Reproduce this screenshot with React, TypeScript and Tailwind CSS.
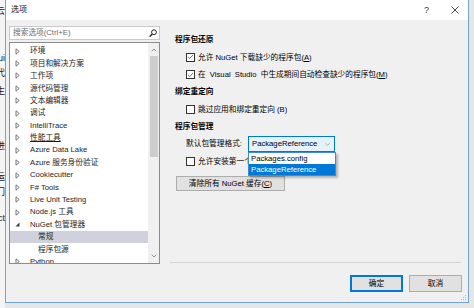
import { Check, ChevronDown, ChevronUp } from "lucide-react";

type Node = { label: string; kind: "closed" | "open" | "child"; selected?: boolean; underline?: boolean };

const tree: Node[] = [
  { label: "环境", kind: "closed" },
  { label: "项目和解决方案", kind: "closed" },
  { label: "工作项", kind: "closed" },
  { label: "源代码管理", kind: "closed" },
  { label: "文本编辑器", kind: "closed" },
  { label: "调试", kind: "closed" },
  { label: "IntelliTrace", kind: "closed" },
  { label: "性能工具", kind: "closed", underline: true },
  { label: "Azure Data Lake", kind: "closed" },
  { label: "Azure 服务身份验证", kind: "closed" },
  { label: "Cookiecutter", kind: "closed" },
  { label: "F# Tools", kind: "closed" },
  { label: "Live Unit Testing", kind: "closed" },
  { label: "Node.js 工具", kind: "closed" },
  { label: "NuGet 包管理器", kind: "open" },
  { label: "常规", kind: "child", selected: true },
  { label: "程序包源", kind: "child" },
  { label: "Python", kind: "closed" },
];

// bits of the window behind the dialog, only the right edge shows
const behind = [
  { y: 7, t: "云" },
  { y: 38, t: "ui" },
  { y: 6, t: "代" },
  { y: 9, t: "生" },
  { y: 46, t: "进" },
  { y: 22, t: "运" },
  { y: 6, t: "门" },
  { y: 17, t: "ct" },
];

function Arrow({ open }: { open: boolean }) {
  if (open) {
    return (
      <svg width="5" height="5" viewBox="0 0 5 5">
        <path d="M4.5 0.5 L4.5 4.5 L0.5 4.5 Z" fill="#3c3c3c" />
      </svg>
    );
  }
  return (
    <svg width="5" height="7" viewBox="0 0 5 7">
      <path d="M1 0.8 L4.2 3.5 L1 6.2 Z" fill="none" stroke="#6a6a6a" strokeWidth="0.9" />
    </svg>
  );
}

function Box({ checked }: { checked?: boolean }) {
  return (
    <span className="flex h-[9px] w-[9px] shrink-0 items-center justify-center border border-[#333] bg-white">
      {checked && <Check size={8} strokeWidth={2.2} color="#222" />}
    </span>
  );
}

function Key({ k }: { k: string }) {
  return (
    <>
      (<span className="underline underline-offset-1">{k}</span>)
    </>
  );
}

export default function App() {
  return (
    <div
      className="flex h-[308px] w-[474px] overflow-hidden bg-[#e6e6e6] text-[7.7px] leading-none text-black"
      style={{ fontFamily: '"Liberation Sans", "Noto Sans CJK SC", sans-serif' }}
    >
      {/* window behind */}
      <div className="flex h-full w-[5px] shrink-0 flex-col overflow-hidden bg-[#f4f4f4] text-[9px] text-[#222]">
        {behind.map((b, i) => (
          <div key={i} className="flex justify-end whitespace-nowrap" style={{ marginTop: b.y }}>
            {b.t}
          </div>
        ))}
      </div>

      {/* dialog */}
      <div className="flex h-[303px] w-[464px] shrink-0 flex-col border border-t-0 border-[#6ea5d9] bg-[#f0f0f0]">
        <div className="flex h-[20px] shrink-0 items-center bg-white pl-[5px] pr-[9px]">
          <span className="text-[8px] text-[#111]">选项</span>
          <span className="ml-auto mr-[22px] text-[9px] text-[#333]">?</span>
          <svg width="8" height="8" viewBox="0 0 8 8">
            <path d="M0.5 0.5 L7.5 7.5 M7.5 0.5 L0.5 7.5" stroke="#333" strokeWidth="0.9" />
          </svg>
        </div>

        <div className="flex h-[244px] shrink-0">
          {/* left side */}
          <div className="ml-[3px] flex w-[151px] shrink-0 flex-col pt-[6px]">
            <div className="flex h-[14px] items-center border border-[#cacaca] bg-white pl-[3px] pr-[2px] text-[#6d6d6d]">
              <span>搜索选项(Ctrl+E)</span>
              <svg className="ml-auto" width="8" height="9" viewBox="0 0 8 9">
                <circle cx="5" cy="3.2" r="2.4" fill="none" stroke="#222" strokeWidth="1" />
                <path d="M3.2 5 L0.6 7.8" stroke="#222" strokeWidth="1.3" />
              </svg>
            </div>
            <div className="mt-[2px] flex h-[222px] border border-[#8c8c8c] bg-white">
              <div className="flex min-w-0 flex-1 flex-col overflow-hidden pt-[2px] text-[#1e1e1e]">
                {tree.map((n) => (
                  <div
                    key={n.label}
                    className={`flex h-[12.4px] shrink-0 items-center whitespace-nowrap ${n.selected ? "bg-[#cfd1dc]" : ""}`}
                  >
                    {n.kind === "child" ? (
                      <span className="w-[28px] shrink-0" />
                    ) : (
                      <span className="ml-[5px] mr-[10px] flex w-[5px] shrink-0 justify-center">
                        <Arrow open={n.kind === "open"} />
                      </span>
                    )}
                    <span className={n.underline ? "underline underline-offset-1" : ""}>{n.label}</span>
                  </div>
                ))}
              </div>
              <div className="flex w-[11px] shrink-0 flex-col items-center bg-[#f0f0f0] text-[#606060]">
                <ChevronUp size={8} strokeWidth={2} className="mt-[3px]" />
                <div className="mt-[2px] h-[101px] w-[8px] bg-[#cdcdcd]" />
                <ChevronDown size={8} strokeWidth={2} className="mb-[3px] mt-auto" />
              </div>
            </div>
          </div>

          {/* right side */}
          <div className="flex flex-1 flex-col pl-[15px] pt-[11.3px]">
            <div className="flex h-[17.4px] items-center font-bold">程序包还原</div>
            <div className="ml-[11px] flex h-[17.4px] items-center gap-[3px]">
              <Box checked />
              <span>
                允许 NuGet 下载缺少的程序包<Key k="A" />
              </span>
            </div>
            <div className="ml-[11px] flex h-[17.4px] items-center gap-[3px]">
              <Box checked />
              <span className="[word-spacing:2px]">
                在 Visual Studio 中生成期间自动检查缺少的程序包<Key k="M" />
              </span>
            </div>
            <div className="flex h-[17.4px] items-center font-bold">绑定重定向</div>
            <div className="ml-[11px] flex h-[17.4px] items-center gap-[3px]">
              <Box />
              <span>跳过应用和绑定重定向 (B)</span>
            </div>
            <div className="flex h-[17.4px] items-center font-bold">程序包管理</div>
            <div className="ml-[11px] flex h-[17.4px] items-center">
              <span className="w-[62px] shrink-0">默认包管理格式:</span>
              <div className="relative">
                <div className="flex h-[16px] w-[87px] items-center border border-[#0078d7] bg-[#e5f1fb] pl-[3px] pr-[3px]">
                  <span>PackageReference</span>
                  <ChevronDown size={7} strokeWidth={1.6} color="#606060" className="ml-auto" />
                </div>
                <div className="absolute left-0 top-full z-10 flex w-[88px] flex-col border border-[#3c8ad8] bg-white shadow-[2px_2px_2px_rgba(0,0,0,0.25)]">
                  <div className="flex h-[11px] items-center pl-[2px]">Packages.config</div>
                  <div className="flex h-[11px] items-center bg-[#0078d7] pl-[2px] text-white">PackageReference</div>
                </div>
              </div>
            </div>
            <div className="ml-[11px] flex h-[17.4px] items-center gap-[3px] whitespace-nowrap">
              <Box />
              <span>允许安装第一个程序包时选择格式(F)</span>
            </div>
            <div className="ml-[1px] mt-[6px] flex h-[15px] w-[109px] items-center justify-center border border-[#adadad] bg-[#e1e1e1]">
              清除所有 NuGet 缓存<Key k="C" />
            </div>
            <div className="mb-[1px] ml-[-5px] mr-[7px] mt-auto h-px bg-[#d3d3d3]" />
          </div>
        </div>

        {/* footer */}
        <div className="flex flex-1 items-start justify-end gap-[6px] pr-[6px] pt-[11px]">
          <div className="flex h-[17px] w-[53px] items-center justify-center border border-[#0078d7] bg-[#e1e1e1] shadow-[inset_0_0_0_1px_#0078d7]">
            确定
          </div>
          <div className="flex h-[17px] w-[53px] items-center justify-center border border-[#adadad] bg-[#e1e1e1]">
            取消
          </div>
        </div>
        <div className="flex justify-end pb-[1px] pr-[1px]">
          <svg width="6" height="6" viewBox="0 0 6 6">
            <rect x="4" y="0" width="1" height="1" fill="#b8b8b8" />
            <rect x="2" y="2" width="1" height="1" fill="#b8b8b8" />
            <rect x="4" y="2" width="1" height="1" fill="#b8b8b8" />
            <rect x="0" y="4" width="1" height="1" fill="#b8b8b8" />
            <rect x="2" y="4" width="1" height="1" fill="#b8b8b8" />
            <rect x="4" y="4" width="1" height="1" fill="#b8b8b8" />
          </svg>
        </div>
      </div>
    </div>
  );
}
